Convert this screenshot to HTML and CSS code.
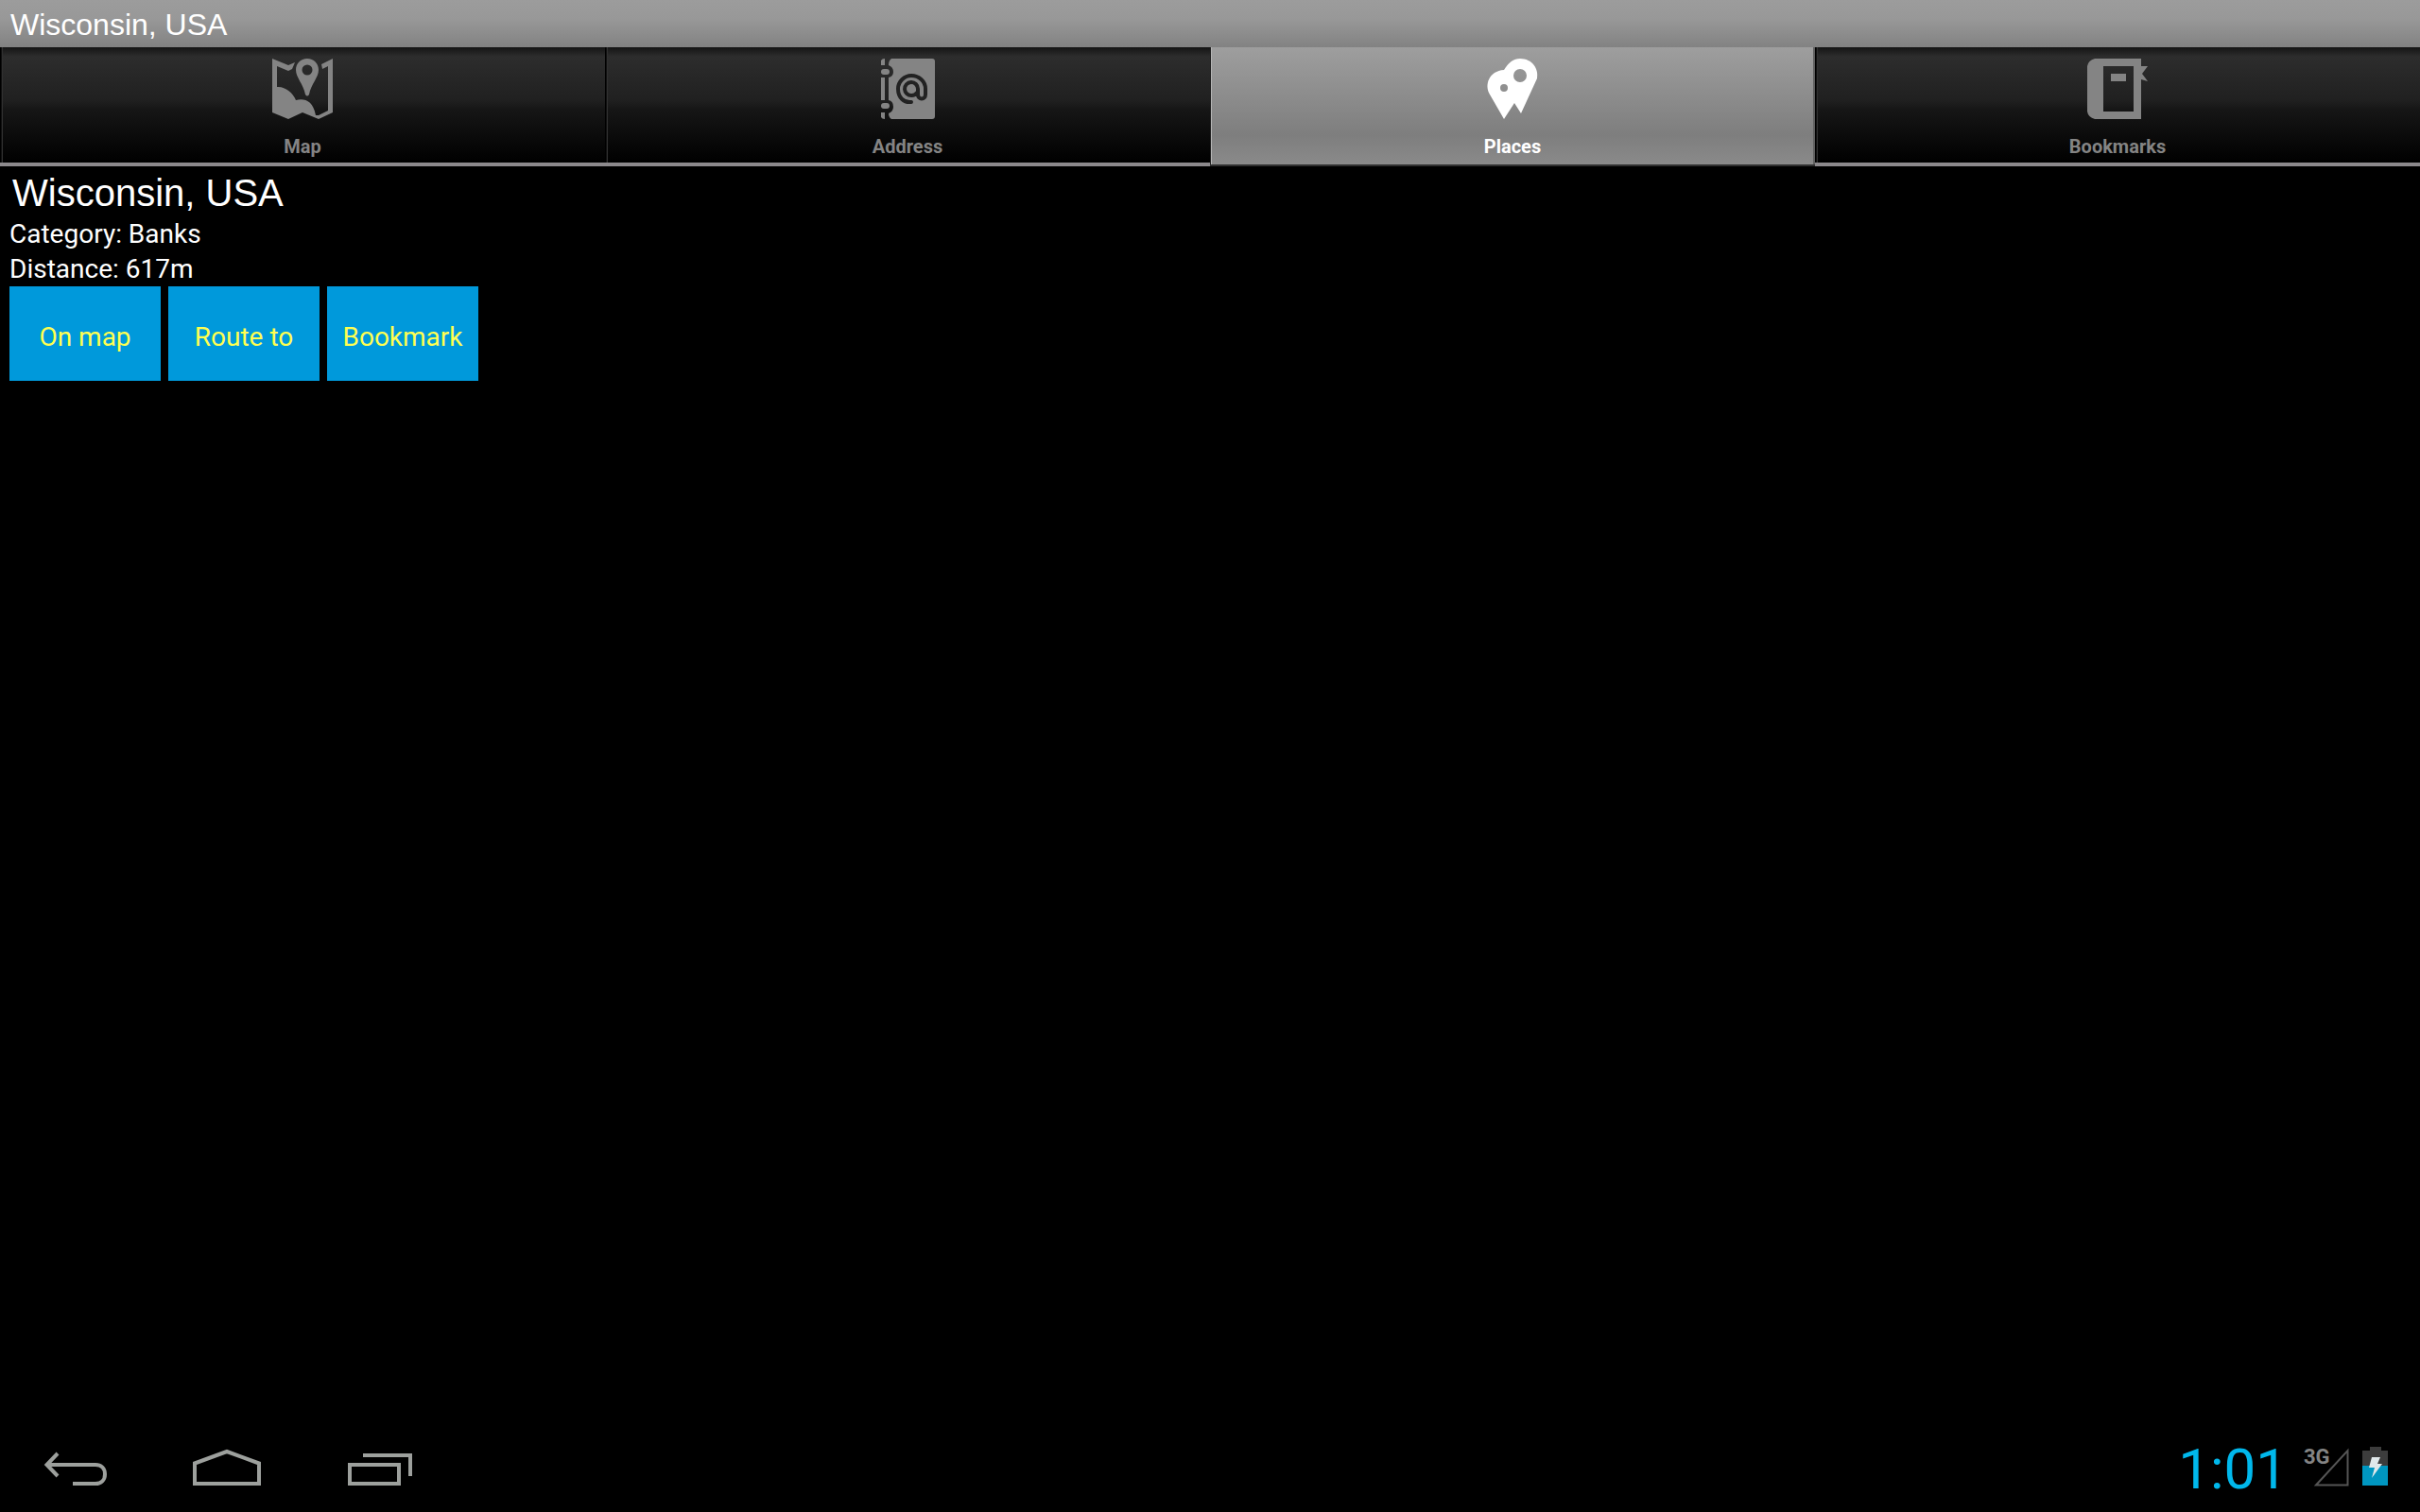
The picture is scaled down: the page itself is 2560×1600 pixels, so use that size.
FILE: index.html
```html
<!DOCTYPE html>
<html lang="en">
<head>
<meta charset="utf-8">
<title>Wisconsin, USA</title>
<link rel="stylesheet" href="styles.css">
</head>
<body>
<header class="title-bar">Wisconsin, USA</header>
<nav class="tabs">
  <button class="tab" type="button">
    <svg class="tab-icon" viewBox="0 0 64 64" aria-hidden="true">
      <path fill-rule="evenodd" d="M0 0L17 7L24 4L21 11L17 13L5 8V30C13 29 22 36 25 44C34 42 43 44 46 60L49 60L59 55V8L53 11L52 6L64 0V57L49 64L32 57L17 64L0 57Z"/>
      <path fill-rule="evenodd" d="M37 0C30 0 25 5 25 12C25 20 33 27 35 38Q37 41 39 38C41 27 49 20 49 12C49 5 44 0 37 0ZM37 6.500A5.500 5.500 0 1 1 37 17.500A5.500 5.500 0 1 1 37 6.500Z"/>
    </svg>
    <span>Map</span>
  </button>
  <button class="tab" type="button">
    <svg class="tab-icon" viewBox="0 0 64 64" aria-hidden="true">
      <path d="M15 0H58Q61 0 61 3V61Q61 64 58 64H15Q12 62 12 58Q17 56 17 51Q17 45 12 44V20Q17 19 17 14Q17 9 12 7Q12 2 15 0ZM4 2Q5 0 8 0V7H4ZM4 20H8V44H4ZM4 57H8V64Q5 64 4 62Z"/>
      <rect x="4" y="11" width="9" height="6" rx="3"/>
      <rect x="4" y="47" width="9" height="6" rx="3"/>
      <path class="cut" d="M36 46C28 47 22 41 22 32C22 24 29 18 36 18C44 18 51 24 51 32V38C51 44 43 44 43 38V32M43 32A7 7 0 1 0 36.500 39Q40 39 42 36"/>
    </svg>
    <span>Address</span>
  </button>
  <button class="tab selected" type="button">
    <svg class="tab-icon" viewBox="0 0 64 64" aria-hidden="true">
      <path fill-rule="evenodd" d="M23 64L8 38C2 28 7 13 23 12C28 4 33 0 40 0C53 0 60 11 58 21L41 58L34 47ZM40 11A7 7 0 1 0 40 25A7 7 0 1 0 40 11ZM23 27A4 4 0 1 0 23 35A4 4 0 1 0 23 27Z"/>
    </svg>
    <span>Places</span>
  </button>
  <button class="tab" type="button">
    <svg class="tab-icon" viewBox="0 0 64 64" aria-hidden="true">
      <path fill-rule="evenodd" d="M8 0H57V8H64L58 16L64 24L57 22V64H8Q1 62 0 56V8Q1 2 8 0ZM17 8V56H49V8ZM25 16H41V24H25Z"/>
    </svg>
    <span>Bookmarks</span>
  </button>
</nav>
<main class="details">
  <h1>Wisconsin, USA</h1>
  <p>Category: Banks</p>
  <p>Distance: 617m</p>
  <div class="actions">
    <button type="button">On map</button>
    <button type="button">Route to</button>
    <button type="button">Bookmark</button>
  </div>
</main>
<footer class="system-bar">
  <button class="nav-key" type="button" aria-label="Back">
    <svg viewBox="0 0 160 96"><path d="M61 34L49.500 46L61 58M50 46H101C107 46 111 50 111 56C111 62 107 66 101 66H77"/></svg>
  </button>
  <button class="nav-key" type="button" aria-label="Home">
    <svg viewBox="0 0 160 96"><path d="M46 44.500L80 32L114 44.500V66H46Z"/></svg>
  </button>
  <button class="nav-key" type="button" aria-label="Recent apps">
    <svg viewBox="0 0 160 96"><path d="M50 46H102V66H50ZM64 36H114V58"/></svg>
  </button>
  <div class="status">
    <time class="clock">1:01</time>
    <div class="signal">
      <svg viewBox="0 0 40 44" aria-hidden="true"><path d="M3 41.500L36.500 5V41.500Z"/></svg>
      <span>3G</span>
    </div>
    <svg class="battery" viewBox="0 0 28 42" role="img" aria-label="Battery charging">
      <path fill="#3c3c3c" d="M8 0H20V4H27V20H0V4H8Z"/>
      <path fill="#0096c0" d="M0 20H27V41H0Z"/>
      <path fill="#e0e8ea" d="M10 11H19L16 18H21L10 33L13 22H7Z"/>
    </svg>
  </div>
</footer>
</body>
</html>
```
FILE: styles.css
```css
* { box-sizing: border-box; }
body {
  margin: 0;
  min-height: 100vh;
  display: flex;
  flex-direction: column;
  background: #000;
  color: #fff;
  font-family: Roboto, sans-serif;
}
button {
  margin: 0;
  padding: 0;
  border: 0;
  border-radius: 0;
  background: none;
  color: inherit;
  font-family: inherit;
}
.title-bar {
  height: 50px;
  padding: 0 11px;
  background: linear-gradient(#9c9c9c, #989898 40%, #828282);
  font: 32px/52px "Liberation Sans", Arial, sans-serif;
}
.tabs {
  display: grid;
  grid-template-columns: repeat(4, 1fr);
  height: 126px;
}
.tab {
  display: flex;
  flex-direction: column;
  align-items: center;
  justify-content: space-between;
  padding: 12px 0 5px;
  border-bottom: 4px solid #8c898c;
  background:
    linear-gradient(90deg, #000 1px, #101010 1px 2px, #303030 2px 3px, transparent 3px),
    linear-gradient(#141414, #2d2d2d 8%, #202020 46%, #161616 54%, #000);
  color: #848484;
  fill: #848484;
  font-size: 20px;
  font-weight: 700;
  line-height: 24px;
}
.tab.selected {
  border-bottom: 2px solid #303030;
  padding-bottom: 7px;
  background:
    linear-gradient(90deg, #202020 1px, #b5b5b5 1px 2px, transparent 2px calc(100% - 2px), #606060 calc(100% - 2px)),
    linear-gradient(#9e9e9e, #7e7e7e 75%, #8a8a8a);
  color: #fff;
  fill: #fff;
}
.tab-icon { width: 64px; height: 64px; }
.cut {
  fill: none;
  stroke: #222;
  stroke-width: 4;
  stroke-linecap: round;
}
.details {
  flex: 1;
  padding: 4px 10px;
}
h1 {
  margin: 0 0 1px;
  padding: 0 3px;
  font: 40px/48px "Liberation Sans", Arial, sans-serif;
}
p {
  margin: 0;
  font-size: 28px;
  line-height: 37px;
}
.actions {
  display: flex;
  gap: 8px;
}
.actions button {
  width: 160px;
  height: 100px;
  padding-top: 6px;
  background: #0099db;
  color: #ffff50;
  font-size: 28px;
}
.system-bar {
  display: flex;
  height: 96px;
}
.nav-key { width: 160px; height: 96px; }
.nav-key svg {
  display: block;
  width: 160px;
  height: 96px;
  fill: none;
  stroke: #9da09d;
  stroke-width: 4;
}
.status {
  display: flex;
  align-items: center;
  margin-left: auto;
  padding-right: 33px;
}
.clock {
  margin-right: 17px;
  padding-top: 6px;
  color: #00b8ec;
  font-size: 60px;
  line-height: 90px;
}
.signal {
  display: grid;
  width: 50px;
  margin-right: 12px;
  color: #848484;
  font-size: 22px;
  font-weight: 700;
  line-height: 24px;
}
.signal svg, .signal span { grid-area: 1 / 1; }
.signal svg {
  justify-self: end;
  width: 40px;
  height: 44px;
  fill: none;
  stroke: #555;
  stroke-width: 2;
}
.battery { width: 28px; height: 42px; }
```
